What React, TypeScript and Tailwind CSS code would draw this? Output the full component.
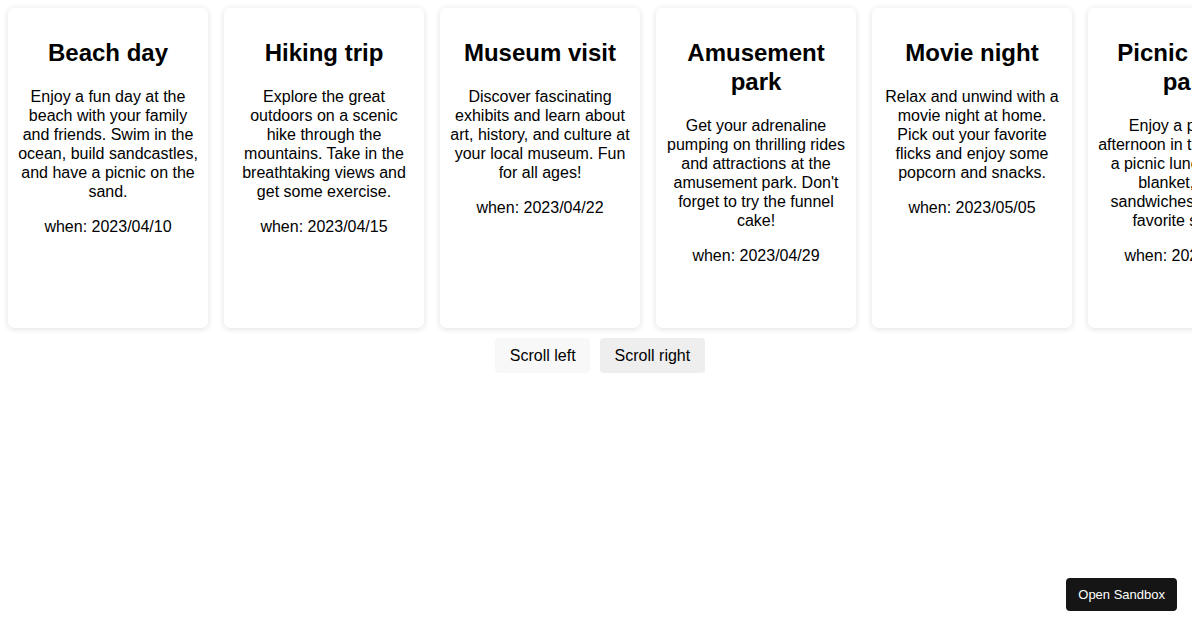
import React from "react";

const events = [
  {
    title: "Beach day",
    text: "Enjoy a fun day at the beach with your family and friends. Swim in the ocean, build sandcastles, and have a picnic on the sand.",
    when: "2023/04/10",
  },
  {
    title: "Hiking trip",
    text: "Explore the great outdoors on a scenic hike through the mountains. Take in the breathtaking views and get some exercise.",
    when: "2023/04/15",
  },
  {
    title: "Museum visit",
    text: "Discover fascinating exhibits and learn about art, history, and culture at your local museum. Fun for all ages!",
    when: "2023/04/22",
  },
  {
    title: "Amusement park",
    text: "Get your adrenaline pumping on thrilling rides and attractions at the amusement park. Don't forget to try the funnel cake!",
    when: "2023/04/29",
  },
  {
    title: "Movie night",
    text: "Relax and unwind with a movie night at home. Pick out your favorite flicks and enjoy some popcorn and snacks.",
    when: "2023/05/05",
  },
  {
    title: "Picnic in the park",
    text: "Enjoy a peaceful afternoon in the park with a picnic lunch. Pack a blanket, some sandwiches, and your favorite snacks.",
    when: "2023/05/13",
  },
  {
    title: "Game night",
    text: "Gather your friends for an evening of board games, card games and plenty of laughs.",
    when: "2023/05/20",
  },
];

export default function App() {
  return (
    <div className="min-h-screen bg-white font-['Liberation_Sans',Arial,sans-serif] text-black">
      <div className="mr-2 flex gap-4 overflow-hidden pt-2 pb-[10px] pl-2">
        {events.map((e) => (
          <div
            key={e.title}
            className="h-[320px] w-[200px] shrink-0 rounded-md bg-white p-[10px] text-center shadow-[0_1px_6px_rgba(0,0,0,0.13)]"
          >
            <h2 className="mt-5 mb-5 text-2xl leading-[29px] font-bold">{e.title}</h2>
            <p className="mb-4 text-base leading-[19px]">{e.text}</p>
            <p className="text-base leading-[19px]">when: {e.when}</p>
          </div>
        ))}
      </div>
      <div className="flex justify-center gap-[10px]">
        <button className="h-[35px] rounded bg-[#f8f8f8] px-[14.5px] text-base">Scroll left</button>
        <button className="h-[35px] rounded bg-[#eeeeee] px-[14.5px] text-base">Scroll right</button>
      </div>
      <button className="fixed right-[23px] bottom-[19px] h-[33px] rounded bg-[#151515] px-3 text-[13px] text-white">
        Open Sandbox
      </button>
    </div>
  );
}
